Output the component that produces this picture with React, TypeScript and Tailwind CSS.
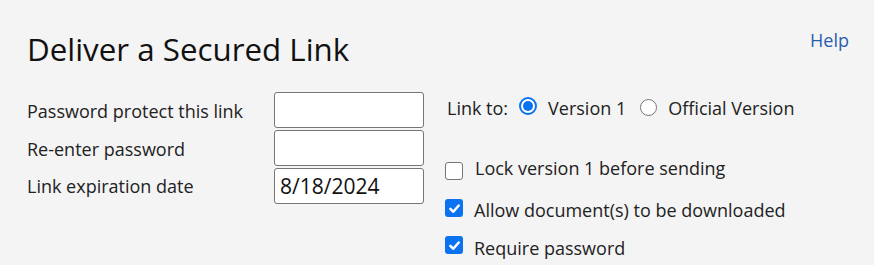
import React from "react";

const Check = () => (
  <span className="w-[18px] h-[18px] rounded-[3px] bg-[#0b72f0] flex items-center justify-center shrink-0">
    <svg width="13" height="13" viewBox="0 0 12 12" fill="none">
      <path d="M2.2 6.4 L4.9 9 L9.9 3.2" stroke="white" strokeWidth="2.3" strokeLinecap="round" strokeLinejoin="round" />
    </svg>
  </span>
);

export default function App() {
  return (
    <div
      className="w-[874px] h-[265px] bg-[#f4f4f4] text-[#222] overflow-hidden"
      style={{ fontFamily: '"Open Sans", sans-serif' }}
    >
      <div className="flex justify-between items-start pl-[27px] pr-[25px] pt-[29px]">
        <h1 className="text-[31.3px] leading-[40px] text-[#111]">Deliver a Secured Link</h1>
        <a className="text-[18px] leading-[24px] text-[#2a5db0] -mt-[1px]">Help</a>
      </div>
      <div className="flex pl-[27px] pt-[23px]">
        <div className="flex flex-col w-[247px] text-[18px] leading-[24px]">
          <div className="h-[38px] flex items-center">Password protect this link</div>
          <div className="h-[37px] flex items-center">Re-enter password</div>
          <div className="h-[37px] flex items-center">Link expiration date</div>
        </div>
        <div className="flex flex-col gap-[2px] w-[150px]">
          <div className="h-[36px] border border-[#767676] rounded-[3px] bg-white" />
          <div className="h-[36px] border border-[#767676] rounded-[3px] bg-white" />
          <div className="h-[36px] border border-[#767676] rounded-[3px] bg-white flex items-center pl-[5px] text-[21px] leading-[28px] text-[#111]">
            8/18/2024
          </div>
        </div>
        <div className="flex flex-col ml-[21px] pt-[4px] text-[18px] leading-[24px]">
          <div className="flex items-start">
            <span className="mr-[11px] pl-[2px]">Link to:</span>
            <span className="mt-[1px] w-[18px] h-[18px] rounded-full border-2 border-[#0b72f0] bg-white flex items-center justify-center mr-[11px] shrink-0">
              <span className="w-[10px] h-[10px] rounded-full bg-[#0b72f0]" />
            </span>
            <span className="mr-[14px]">Version 1</span>
            <span className="mt-[3px] w-[17px] h-[17px] rounded-full border border-[#767676] bg-white mr-[11px] shrink-0" />
            <span>Official Version</span>
          </div>
          <div className="flex items-start mt-[36px]">
            <span className="mt-[6px] w-[18px] h-[18px] rounded-[3px] border border-[#767676] bg-white shrink-0" />
            <span className="ml-[12px]">Lock version 1 before sending</span>
          </div>
          <div className="flex items-start mt-[18px]">
            <span className="mt-[1px]"><Check /></span>
            <span className="ml-[11px]">Allow document(s) to be downloaded</span>
          </div>
          <div className="flex items-start mt-[14px]">
            <Check />
            <span className="ml-[11px]">Require password</span>
          </div>
        </div>
      </div>
    </div>
  );
}
